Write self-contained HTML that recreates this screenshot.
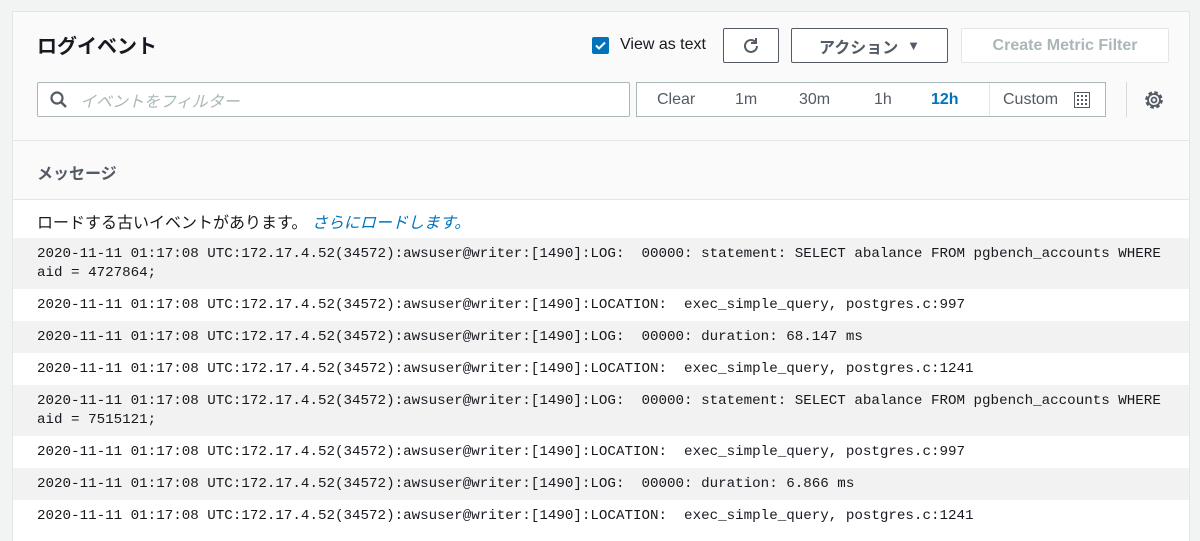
<!DOCTYPE html>
<html><head><meta charset="utf-8"><style>
*{box-sizing:border-box;margin:0;padding:0}
body{width:1200px;height:531px;overflow:hidden;background:#f2f3f3;font-family:"Liberation Sans","Noto Sans CJK JP",sans-serif;color:#16191f;position:relative}
.panel{position:absolute;left:12px;top:11px;width:1178px;height:530px;background:#fff;border:1px solid #e4e6e6;border-bottom:none}
.abs{position:absolute}
.hdr{left:0;top:0;width:1176px;height:129px;background:#fafafa;border-bottom:1px solid #e4e6e6}
.mh{left:0;top:129px;width:1176px;height:59px;background:#fafafa;border-bottom:1px solid #e4e6e6}
.btn{position:absolute;border:1px solid #545b64;border-radius:2px;background:#fff;display:flex;align-items:center;justify-content:center;font-size:16px;font-weight:bold;color:#545b64}
.row{position:absolute;left:0;width:1176px;font-family:"Liberation Mono",monospace;font-size:14.2px;line-height:19px;padding:7px 0 0 24px;white-space:pre;color:#16191f}
.g{background:#f2f2f2}
.tr{position:absolute;top:70px;height:35px;font-size:16px;color:#545b64;display:flex;align-items:center}
</style></head><body>
<div class="panel">
<div class="abs hdr"></div>
<div class="abs" style="left:24px;top:18px;font-size:20px;font-weight:bold">ログイベント</div>
<div class="abs" style="left:579px;top:25px;width:17px;height:17px;background:#0073bb;border-radius:2px"><svg width="17" height="17"><path d="M4 8.5l3 3 6-6" stroke="#fff" stroke-width="2" fill="none"/></svg></div>
<div class="abs" style="left:607px;top:24px;font-size:16px">View as text</div>
<div class="btn" style="left:710px;top:16px;width:56px;height:35px"><svg width="22" height="22" viewBox="0 0 22 22"><path d="M17 11a6 6 0 1 1-2-4.5" stroke="#545b64" stroke-width="2" fill="none"/><path d="M16 3v5h-5" stroke="#545b64" stroke-width="2" fill="none"/></svg></div>
<div class="btn" style="left:778px;top:16px;width:157px;height:35px">アクション&nbsp;&nbsp;<span style="font-size:13px">▼</span></div>
<div class="btn" style="left:948px;top:16px;width:208px;height:35px;border-color:#e4e6e6;color:#aab7b8">Create Metric Filter</div>
<div class="abs" style="left:24px;top:70px;width:593px;height:35px;border:1px solid #aab7b8;border-radius:2px;background:#fff"></div>
<svg class="abs" style="left:36px;top:78px" width="20" height="20"><circle cx="8" cy="8" r="5.5" stroke="#545b64" stroke-width="2.2" fill="none"/><path d="M12 12l5 5" stroke="#545b64" stroke-width="2.5"/></svg>
<div class="abs" style="left:67px;top:76px;font-size:16px;color:#aab7b8;font-style:italic">イベントをフィルター</div>
<div class="abs" style="left:623px;top:70px;width:470px;height:35px;border:1px solid #aab7b8;background:#fff"></div>
<div class="tr" style="left:644px">Clear</div>
<div class="tr" style="left:722px">1m</div>
<div class="tr" style="left:786px">30m</div>
<div class="tr" style="left:861px">1h</div>
<div class="tr" style="left:918px;color:#0073bb;font-weight:bold">12h</div>
<div class="abs" style="left:976px;top:71px;width:1px;height:33px;background:#e4e6e6"></div>
<div class="tr" style="left:990px">Custom</div>
<svg class="abs" style="left:1061px;top:80px" width="16" height="16"><rect x="0.5" y="0.5" width="15" height="15" fill="none" stroke="#545b64"/><path d="M3 3h2v2H3zM7 3h2v2H7zM11 3h2v2h-2zM3 7h2v2H3zM7 7h2v2H7zM11 7h2v2h-2zM3 11h2v2H3zM7 11h2v2H7zM11 11h2v2h-2z" fill="#545b64"/></svg>
<div class="abs" style="left:1113px;top:70px;width:1px;height:35px;background:#d5dbdb"></div>
<svg class="abs" style="left:1130px;top:77px" width="22" height="22" viewBox="0 0 22 22"><circle cx="11" cy="11" r="7.5" stroke="#545b64" stroke-width="2.6" fill="none" stroke-dasharray="3.5 2.4"/><circle cx="11" cy="11" r="6" stroke="#545b64" stroke-width="1.8" fill="none"/><circle cx="11" cy="11" r="2.5" stroke="#545b64" stroke-width="1.8" fill="none"/></svg>
<div class="abs mh"></div>
<div class="abs" style="left:24px;top:148px;font-size:16px;font-weight:bold;color:#545b64">メッセージ</div>
<div class="abs" style="left:24px;top:197px;font-size:16px">ロードする古いイベントがあります。 <span style="color:#0073bb;font-style:italic">さらにロードします。</span></div>
<div class="row g" style="top:226px;height:51px">2020-11-11 01:17:08 UTC:172.17.4.52(34572):awsuser@writer:[1490]:LOG:  00000: statement: SELECT abalance FROM pgbench_accounts WHERE
aid = 4727864;</div>
<div class="row" style="top:277px;height:32px">2020-11-11 01:17:08 UTC:172.17.4.52(34572):awsuser@writer:[1490]:LOCATION:  exec_simple_query, postgres.c:997</div>
<div class="row g" style="top:309px;height:32px">2020-11-11 01:17:08 UTC:172.17.4.52(34572):awsuser@writer:[1490]:LOG:  00000: duration: 68.147 ms</div>
<div class="row" style="top:341px;height:32px">2020-11-11 01:17:08 UTC:172.17.4.52(34572):awsuser@writer:[1490]:LOCATION:  exec_simple_query, postgres.c:1241</div>
<div class="row g" style="top:373px;height:51px">2020-11-11 01:17:08 UTC:172.17.4.52(34572):awsuser@writer:[1490]:LOG:  00000: statement: SELECT abalance FROM pgbench_accounts WHERE
aid = 7515121;</div>
<div class="row" style="top:424px;height:32px">2020-11-11 01:17:08 UTC:172.17.4.52(34572):awsuser@writer:[1490]:LOCATION:  exec_simple_query, postgres.c:997</div>
<div class="row g" style="top:456px;height:32px">2020-11-11 01:17:08 UTC:172.17.4.52(34572):awsuser@writer:[1490]:LOG:  00000: duration: 6.866 ms</div>
<div class="row" style="top:488px;height:32px">2020-11-11 01:17:08 UTC:172.17.4.52(34572):awsuser@writer:[1490]:LOCATION:  exec_simple_query, postgres.c:1241</div>
</div>
</body></html>
